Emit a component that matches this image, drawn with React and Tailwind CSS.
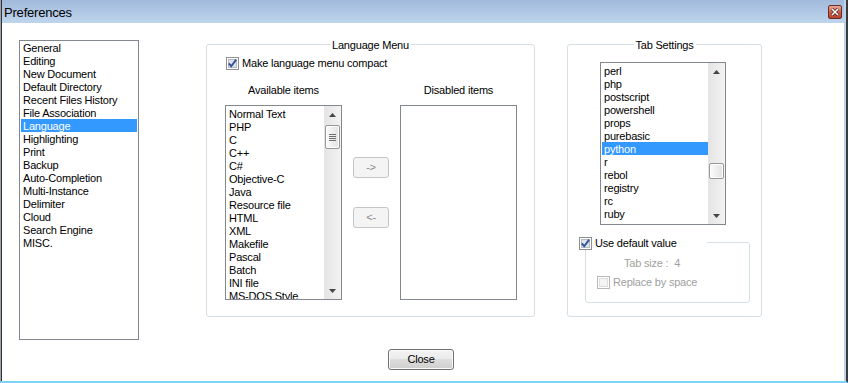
import React from "react";

function Arrow({ down }) {
  return (
    <svg width="7" height="4" viewBox="0 0 7 4">
      <polygon points={down ? "0,0 7,0 3.5,4" : "0,4 3.5,0 7,4"} fill="#454545" />
    </svg>
  );
}

function Scrollbar({ thumbTop, thumbH, grip }) {
  return (
    <div className="w-[17px] h-full shrink-0 bg-gradient-to-r from-[#e4e4e4] to-[#f3f3f3] flex flex-col items-center">
      <div className="h-[17px] w-full flex items-center justify-center shrink-0">
        <Arrow />
      </div>
      <div
        className="w-[15px] shrink-0 rounded-[2px] border border-[#979797] bg-gradient-to-r from-[#fbfbfb] to-[#e2e2e2] shadow-[inset_0_0_0_1px_#fdfdfd] flex items-center justify-center"
        style={{ marginTop: thumbTop, height: thumbH }}
      >
        {grip && (
          <div className="flex flex-col gap-[1px]">
            <div className="w-[7px] h-[1px] bg-[#6e6e6e]" />
            <div className="w-[7px] h-[1px] bg-[#6e6e6e]" />
            <div className="w-[7px] h-[1px] bg-[#6e6e6e]" />
            <div className="w-[7px] h-[1px] bg-[#6e6e6e]" />
          </div>
        )}
      </div>
      <div className="flex-1" />
      <div className="h-[17px] w-full flex items-center justify-center shrink-0">
        <Arrow down />
      </div>
    </div>
  );
}

function Check({ checked, disabled }) {
  return (
    <svg width="13" height="13" viewBox="0 0 13 13" className="shrink-0">
      <rect x="0.5" y="0.5" width="12" height="12" fill="#ffffff" stroke={disabled ? "#b9b9b9" : "#8e8f8f"} />
      <rect x="2.5" y="2.5" width="8" height="8" fill={disabled ? "#f4f4f4" : "#dfe4ec"} stroke={disabled ? "#dedede" : "#b4b9c2"} />
      {checked && (
        <path d="M2.8 6.3 L5.2 9.2 L10.2 2.6" stroke="#33529a" strokeWidth="1.9" fill="none" />
      )}
    </svg>
  );
}

function Row({ children, sel }) {
  return (
    <div
      className={
        "h-[13px] leading-[14px] pl-[2px] whitespace-nowrap overflow-hidden shrink-0 " +
        (sel ? "bg-[#3399ff] text-white" : "")
      }
    >
      {children}
    </div>
  );
}

function Group({ title, className, children }) {
  return (
    <div className={"relative border border-[#d5dfe5] rounded-[3px] " + className}>
      <span className="absolute top-[-6px] left-1/2 -translate-x-1/2 bg-white px-[2px] leading-[13px] whitespace-nowrap">
        {title}
      </span>
      {children}
    </div>
  );
}

const cats = [
  "General",
  "Editing",
  "New Document",
  "Default Directory",
  "Recent Files History",
  "File Association",
  "Language",
  "Highlighting",
  "Print",
  "Backup",
  "Auto-Completion",
  "Multi-Instance",
  "Delimiter",
  "Cloud",
  "Search Engine",
  "MISC.",
];

const langs = [
  "Normal Text",
  "PHP",
  "C",
  "C++",
  "C#",
  "Objective-C",
  "Java",
  "Resource file",
  "HTML",
  "XML",
  "Makefile",
  "Pascal",
  "Batch",
  "INI file",
  "MS-DOS Style",
];

const tabs = [
  "perl",
  "php",
  "postscript",
  "powershell",
  "props",
  "purebasic",
  "python",
  "r",
  "rebol",
  "registry",
  "rc",
  "ruby",
];

export default function App() {
  return (
    <div className="w-[848px] h-[383px] overflow-hidden border-l border-l-[#9aa4ae] border-r-2 border-r-[#3b3b3b] border-b-2 border-b-[#76d6f4] font-['Liberation_Sans',Arial,sans-serif] text-[11px] tracking-[-0.2px] text-black">
      <div className="h-full border-l border-l-[#333333] border-r-2 border-r-[#bcd3ea] bg-white flex flex-col">
        {/* Title bar */}
        <div className="h-[23px] shrink-0 bg-gradient-to-b from-[#a1badb] to-[#bed5ec] flex items-center justify-between pl-[2px] pr-[2px]">
          <span className="text-[13px] leading-[15px] tracking-[-0.2px] pt-[2px]">Preferences</span>
          <div className="w-[14px] h-[14px] rounded-[2px] border border-[#6b2b22] bg-gradient-to-b from-[#e6aa9c] via-[#c9604c] to-[#b7442f] flex items-center justify-center">
            <svg width="8" height="8" viewBox="0 0 8 8">
              <path d="M1 1L7 7M7 1L1 7" stroke="#4a1a12" strokeWidth="3" />
              <path d="M1 1L7 7M7 1L1 7" stroke="#ffffff" strokeWidth="1.6" />
            </svg>
          </div>
        </div>

        {/* Body */}
        <div className="flex-1 flex flex-col pl-[17px] pt-[17px]">
          <div className="flex items-start">
            {/* Category list */}
            <div className="w-[120px] h-[300px] shrink-0 border border-[#828790] px-[1px] flex flex-col">
              {cats.map((c) => (
                <Row key={c} sel={c === "Language"}>
                  {c}
                </Row>
              ))}
            </div>

            {/* Language Menu */}
            <Group title="Language Menu" className="ml-[67px] mt-[4px] w-[329px] h-[273px] shrink-0">
              <div className="flex flex-col">
                <div className="mt-[12px] ml-[19px] h-[13px] flex items-center gap-[3px]">
                  <Check checked />
                  <span className="leading-[13px]">Make language menu compact</span>
                </div>
                <div className="mt-[14px] ml-[18px] flex leading-[13px]">
                  <div className="w-[117px] text-center">Available items</div>
                  <div className="w-[117px] ml-[58px] text-center">Disabled items</div>
                </div>
                <div className="mt-[8px] ml-[18px] flex h-[195px]">
                  <div className="w-[117px] h-[195px] border border-[#828790] flex">
                    <div className="flex-1 flex flex-col overflow-hidden pl-[1px] pt-[1px]">
                      {langs.map((l) => (
                        <Row key={l}>{l}</Row>
                      ))}
                    </div>
                    <Scrollbar thumbTop={2} thumbH={24} grip />
                  </div>
                  <div className="w-[58px] flex flex-col items-center pt-[52px]">
                    <div className="w-[36px] h-[21px] rounded-[3px] border border-[#c3c6c9] bg-[#f4f4f4] text-[#8a8a8a] flex items-center justify-center">
                      -&gt;
                    </div>
                    <div className="mt-[29px] w-[36px] h-[21px] rounded-[3px] border border-[#c3c6c9] bg-[#f4f4f4] text-[#8a8a8a] flex items-center justify-center">
                      &lt;-
                    </div>
                  </div>
                  <div className="w-[117px] h-[195px] border border-[#828790]" />
                </div>
              </div>
            </Group>

            {/* Tab Settings */}
            <Group title="Tab Settings" className="ml-[32px] mt-[4px] w-[195px] h-[273px] shrink-0">
              <div className="flex flex-col">
                <div className="ml-[32px] mt-[17px] w-[126px] h-[163px] border border-[#828790] flex">
                  <div className="flex-1 flex flex-col overflow-hidden pt-[1px] pl-[1px]">
                    {tabs.map((t) => (
                      <Row key={t} sel={t === "python"}>
                        {t}
                      </Row>
                    ))}
                  </div>
                  <Scrollbar thumbTop={83} thumbH={16} />
                </div>
                <div className="ml-[11px] mt-[12px] w-[171px] flex flex-col">
                  <div className="relative z-10 w-[128px] h-[13px] bg-white flex items-center gap-[3px]">
                    <Check checked />
                    <span className="leading-[13px]">Use default value</span>
                  </div>
                  <div className="ml-[6px] -mt-[8px] w-[165px] h-[61px] border border-[#d5dfe5] rounded-[3px] flex flex-col">
                    <div className="mt-[14px] ml-[38px] leading-[13px] text-[#a0a0a0] whitespace-pre">Tab size :  4</div>
                    <div className="mt-[6px] ml-[11px] h-[13px] flex items-center gap-[3px]">
                      <Check disabled />
                      <span className="leading-[13px] text-[#a0a0a0]">Replace by space</span>
                    </div>
                  </div>
                </div>
              </div>
            </Group>
          </div>

          {/* Close */}
          <div className="ml-[369px] mt-[9px] w-[66px] h-[21px] rounded-[3px] border border-[#707070] bg-[linear-gradient(#f2f2f2_0%,#ebebeb_50%,#dddddd_50%,#cfcfcf_100%)] shadow-[inset_0_0_0_1px_#fbfbfb] flex items-center justify-center">
            Close
          </div>
        </div>
      </div>
    </div>
  );
}
